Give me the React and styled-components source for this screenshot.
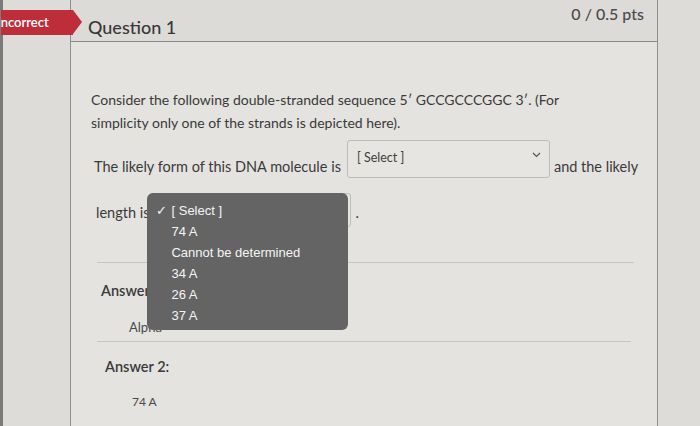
import styled, { createGlobalStyle } from "styled-components";

const Global = createGlobalStyle`
  html, body {
    margin: 0;
    padding: 0;
    background: #dcdbd7;
    font-family: Lato, "Noto Sans", sans-serif;
    color: #3a3a3a;
    overflow: hidden;
  }
`;

const Page = styled.div`
  display: flex;
  width: 700px;
  height: 426px;
  border-left: 3px solid #7a7a78;
  box-sizing: border-box;
`;

const Gutter = styled.div`
  width: 67px;
  flex-shrink: 0;
  background: #dddcd8;
`;

const Card = styled.div`
  position: relative;
  width: 586px;
  flex-shrink: 0;
  background: #e4e3df;
  border-left: 1px solid #8f8f8d;
  border-right: 1px solid #8f8f8d;
  display: flex;
  flex-direction: column;
`;

const Header = styled.div`
  height: 41px;
  background: #dddbd8;
  border-bottom: 1px solid #8a8a88;
  display: flex;
  justify-content: space-between;
  align-items: flex-start;
  padding: 0 13px 0 17px;
`;

const Title = styled.h2`
  margin: 16px 0 0;
  font-size: 18px;
  font-weight: 500;
  line-height: 22px;
  color: #383838;
`;

const Points = styled.div`
  margin-top: 4px;
  font-size: 16px;
  line-height: 20px;
  font-weight: 500;
  color: #4a4a4a;
`;

const Tag = styled.div`
  position: absolute;
  top: 10px;
  left: -70px;
  height: 25px;
  width: 72px;
  background: #bd2e3a;
  color: #fff;
  font-size: 13px;
  font-weight: 600;
  line-height: 25px;
  white-space: nowrap;
  &::after {
    content: "";
    position: absolute;
    right: -9px;
    top: 0;
    border-top: 12.5px solid transparent;
    border-bottom: 12.5px solid transparent;
    border-left: 9px solid #bd2e3a;
  }
  span {
    margin-left: -4px;
  }
`;

const Body = styled.div`
  display: flex;
  flex-direction: column;
  padding: 0 21px 0 20px;
`;

const Para = styled.p`
  margin: 46px 0 0;
  width: 500px;
  font-size: 14px;
  line-height: 23px;
  color: #3a3a3a;
`;

const Row = styled.div`
  display: flex;
  align-items: flex-end;
  margin-top: ${(p) => p.$top}px;
  padding-left: ${(p) => p.$indent}px;
  font-size: 14.5px;
  line-height: 20px;
  white-space: nowrap;
  & > span {
    flex-shrink: 0;
    margin-bottom: ${(p) => p.$drop}px;
  }
`;

const SelectWrap = styled.div`
  position: relative;
  flex-shrink: 0;
  margin: 0 4px 0 ${(p) => p.$gap}px;
`;

const SelectBox = styled.div`
  width: ${(p) => p.$w}px;
  height: ${(p) => p.$h}px;
  box-sizing: border-box;
  border: 1px solid #bdbcb8;
  border-radius: 3px;
  background: #e6e5e1;
  display: flex;
  align-items: center;
  justify-content: space-between;
  padding: 0 8px 3px 9px;
  font-size: 12.5px;
  color: #3d3d3d;
  svg {
    margin-top: -6px;
  }
`;

const Menu = styled.ul`
  position: absolute;
  top: 0;
  left: -2px;
  width: 201px;
  height: 137px;
  margin: 0;
  padding: 8px 0 0;
  box-sizing: border-box;
  list-style: none;
  background: #646464;
  border-radius: 6px;
  font-family: "Liberation Sans", Arial, sans-serif;
  font-size: 13px;
  color: #f4f4f4;
  z-index: 2;
`;

const Item = styled.li`
  position: relative;
  height: 21px;
  line-height: 20px;
  padding-left: 24px;
  white-space: nowrap;
  &::before {
    content: ${(p) => (p.$checked ? '"✓"' : '""')};
    position: absolute;
    left: 9px;
  }
`;

const Divider = styled.hr`
  margin: ${(p) => p.$top}px 0 0 6px;
  border: 0;
  border-top: 1px solid #c6c5c1;
  width: ${(p) => p.$w}px;
`;

const Label = styled.div`
  margin-top: ${(p) => p.$top}px;
  padding-left: ${(p) => p.$indent}px;
  font-size: 14.5px;
  font-weight: 600;
  line-height: 20px;
  color: #3a3a3a;
`;

const Small = styled.div`
  margin-top: ${(p) => p.$top}px;
  padding-left: ${(p) => p.$indent}px;
  font-size: ${(p) => p.$size}px;
  line-height: 18px;
  color: #4a4a4a;
`;

const Chevron = () => (
  <svg width="9" height="6" viewBox="0 0 9 6">
    <path d="M1 1l3.5 3.5L8 1" fill="none" stroke="#555" strokeWidth="1.2" />
  </svg>
);

const options = ["[ Select ]", "74 A", "Cannot be determined", "34 A", "26 A", "37 A"];

export default function App() {
  return (
    <>
      <Global />
      <Page>
        <Gutter />
        <Card>
          <Tag>
            <span>Incorrect</span>
          </Tag>
          <Header>
            <Title>Question 1</Title>
            <Points>0 / 0.5 pts</Points>
          </Header>
          <Body>
            <Para>
              Consider the following double-stranded sequence 5′ GCCGCCCGGC 3′. (For
              simplicity only one of the strands is depicted here).
            </Para>
            <Row $top={6} $indent={3} $drop={1}>
              <span>The likely form of this DNA molecule is</span>
              <SelectWrap $gap={6}>
                <SelectBox $w={203} $h={38}>
                  <span>[ Select ]</span>
                  <Chevron />
                </SelectBox>
              </SelectWrap>
              <span>and the likely</span>
            </Row>
            <Row $top={15} $indent={5} $drop={4}>
              <span>length is</span>
              <SelectWrap $gap={0}>
                <SelectBox $w={202} $h={34}>
                  <span />
                  <Chevron />
                </SelectBox>
                <Menu>
                  {options.map((o, i) => (
                    <Item key={o} $checked={i === 0}>
                      {o}
                    </Item>
                  ))}
                </Menu>
              </SelectWrap>
              <span>.</span>
            </Row>
            <Divider $top={35} $w={537} />
            <Label $top={18} $indent={10}>Answer 1:</Label>
            <Small $top={17} $indent={38} $size={13}>
              Alpha
            </Small>
            <Divider $top={5} $w={534} />
            <Label $top={15} $indent={14}>Answer 2:</Label>
            <Small $top={16} $indent={41} $size={12}>
              74 A
            </Small>
          </Body>
        </Card>
        <Gutter />
      </Page>
    </>
  );
}
